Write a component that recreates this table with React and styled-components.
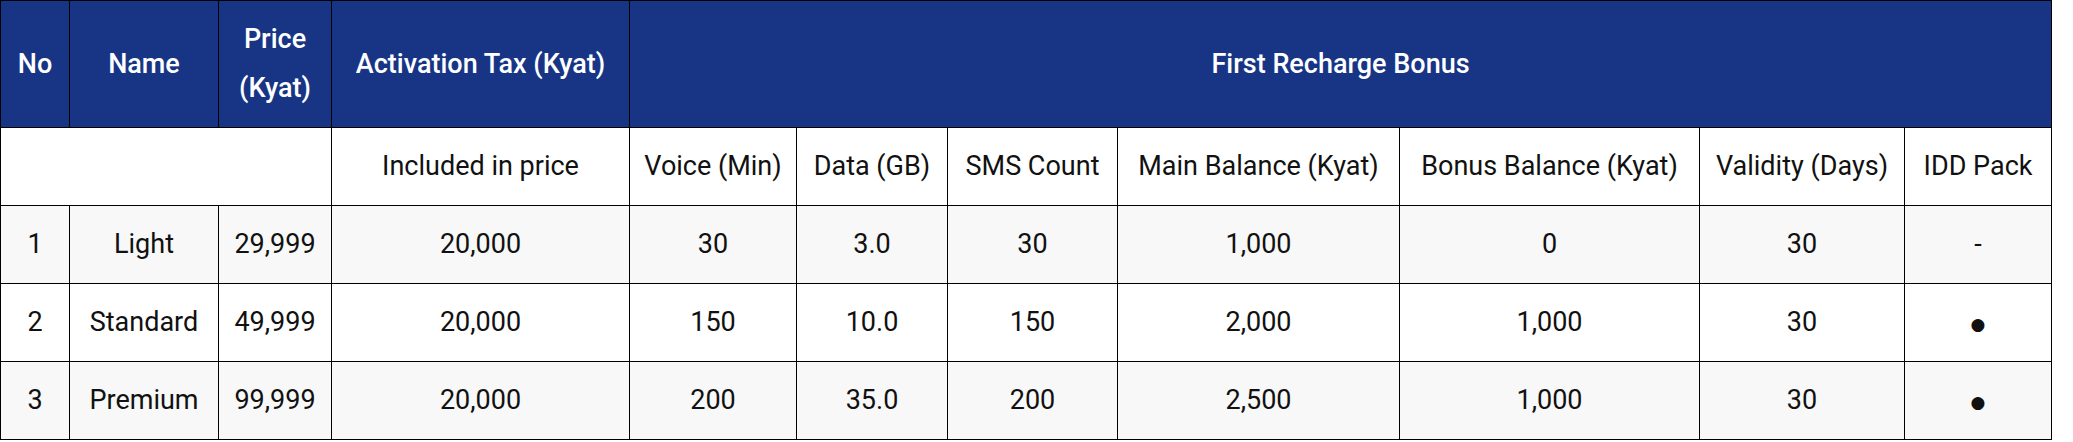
import React from 'react';
import styled, { createGlobalStyle } from 'styled-components';

const columns = [69, 149, 113, 298, 167, 151, 170, 282, 300, 205, 147];

const subHeads = [
  'Voice (Min)',
  'Data (GB)',
  'SMS Count',
  'Main Balance (Kyat)',
  'Bonus Balance (Kyat)',
  'Validity (Days)',
  'IDD Pack',
];

const plans = [
  { no: 1, name: 'Light', price: '29,999', tax: '20,000', voice: '30', data: '3.0', sms: '30', main: '1,000', bonus: '0', days: '30', idd: false },
  { no: 2, name: 'Standard', price: '49,999', tax: '20,000', voice: '150', data: '10.0', sms: '150', main: '2,000', bonus: '1,000', days: '30', idd: true },
  { no: 3, name: 'Premium', price: '99,999', tax: '20,000', voice: '200', data: '35.0', sms: '200', main: '2,500', bonus: '1,000', days: '30', idd: true },
];

function App() {
  return (
    <>
      <GlobalStyle />
      <Table>
        <colgroup>
          {columns.map((w, i) => (
            <col key={i} style={{ width: w }} />
          ))}
        </colgroup>
        <thead>
          <tr>
            <Th>No</Th>
            <Th>Name</Th>
            <Th>
              Price
              <br />
              (Kyat)
            </Th>
            <Th>Activation Tax (Kyat)</Th>
            <Th colSpan={7}>First Recharge Bonus</Th>
          </tr>
        </thead>
        <tbody>
          <Row>
            <Td colSpan={3} />
            <Td>Included in price</Td>
            {subHeads.map((h) => (
              <Td key={h}>{h}</Td>
            ))}
          </Row>
          {plans.map((p, i) => (
            <Row key={p.no} $shaded={i % 2 === 0}>
              <Td>{p.no}</Td>
              <Td>{p.name}</Td>
              <Td>{p.price}</Td>
              <Td>{p.tax}</Td>
              <Td>{p.voice}</Td>
              <Td>{p.data}</Td>
              <Td>{p.sms}</Td>
              <Td>{p.main}</Td>
              <Td>{p.bonus}</Td>
              <Td>{p.days}</Td>
              <Td>{p.idd ? <Dot>●</Dot> : '-'}</Td>
            </Row>
          ))}
        </tbody>
      </Table>
    </>
  );
}

export default App;

const GlobalStyle = createGlobalStyle`
  body {
    margin: 0;
    background: #fff;
    font-family: Roboto, "Liberation Sans", sans-serif;
  }
`;

const Table = styled.table`
  width: 2051px;
  table-layout: fixed;
  border-collapse: collapse;
  font-size: 27px;
  color: #111;
  border: 1px solid #000;
`;

const Th = styled.th`
  background: #183585;
  color: #fff;
  font-weight: 500;
  line-height: 49px;
  height: 126px;
  padding: 0 6px;
  border: 1px solid #000;
  text-align: center;
  vertical-align: middle;
`;

const Row = styled.tr`
  background: ${(p) => (p.$shaded ? '#f8f8f8' : '#fff')};
`;

const Td = styled.td`
  height: 77px;
  padding: 0 6px;
  border: 1px solid #000;
  text-align: center;
  vertical-align: middle;
  line-height: 49px;
  white-space: nowrap;
`;

const Dot = styled.span`
  font-family: "DejaVu Sans", sans-serif;
  font-size: 17px;
`;
